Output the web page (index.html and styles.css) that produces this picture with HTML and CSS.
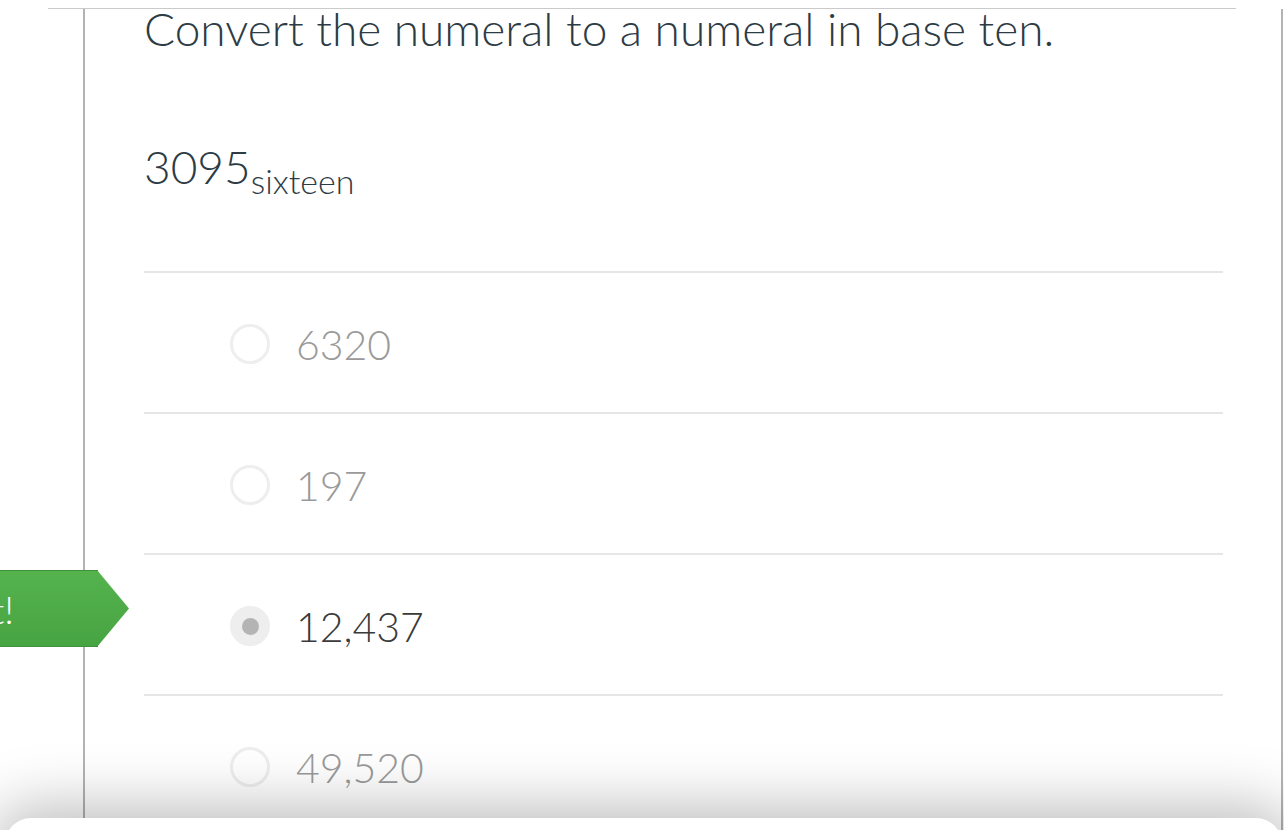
FILE: index.html
```html
<!DOCTYPE html>
<html lang="en">
<head>
  <meta charset="UTF-8" />
  <meta name="viewport" content="width=device-width, initial-scale=1" />
  <title>Quiz Question</title>
  <link rel="stylesheet" href="styles.css">
</head>
<body>

<div class="top-rule"></div>

<div class="question">
  <div class="question-text">Convert the numeral to a numeral in base ten.</div>
  <div class="question-value">3095<sub>sixteen</sub></div>

  <div class="answers">
    <div class="answer">
      <span class="radio"></span>
      <span class="answer-text">6320</span>
    </div>
    <div class="answer">
      <span class="radio"></span>
      <span class="answer-text">197</span>
    </div>
    <div class="answer selected">
      <span class="radio"></span>
      <span class="answer-text">12,437</span>
      <div class="correct-flag">Correct!</div>
    </div>
    <div class="answer">
      <span class="radio"></span>
      <span class="answer-text">49,520</span>
    </div>
  </div>
</div>

<div class="bottom-panel"></div>

</body>
</html>
```

FILE: styles.css
```css
body {
  margin: 0;
  font-family: 'Lato Light', Lato, 'Noto Sans', sans-serif;
  background-color: white;
  color: #2d3b45;
  overflow: hidden;
  height: 830px;
}

.top-rule {
  margin: 8px 0 0 48px;
  width: 1188px;
  height: 1px;
  background-color: #cacaca;
}

.question {
  margin-left: 83px;
  width: 1200px;
  height: 900px;
  border-left: 2px solid #b3b3b3;
  border-right: 2px solid #b3b3b3;
  padding: 1px 58px 0 59px;
  box-sizing: border-box;
}

.question-text {
  font-size: 46px;
  font-weight: 300;
  line-height: 38px;
}

.question-value {
  margin-top: 89px;
  font-size: 46px;
  font-weight: 300;
  line-height: 60px;
}

.question-value sub {
  font-size: 34px;
  vertical-align: -10px;
  line-height: 0;
}

.answers {
  margin-top: 74px;
}

.answer {
  position: relative;
  display: flex;
  align-items: center;
  gap: 26px;
  padding-left: 86px;
  padding-top: 3px;
  height: 136px;
  border-top: 2px solid #e6e6e6;
}

.radio {
  width: 34px;
  height: 34px;
  border: 3px solid #eeeeee;
  border-radius: 50%;
  display: flex;
  align-items: center;
  justify-content: center;
}

.answer-text {
  font-size: 41px;
  font-weight: 300;
  color: #9a9a9a;
}

.selected .radio {
  background-color: #eeeeee;
}

.selected .radio::after {
  content: '';
  width: 17px;
  height: 17px;
  border-radius: 50%;
  background-color: #b4b4b4;
}

.selected .answer-text {
  color: #3a3a3a;
}

.correct-flag {
  position: absolute;
  top: 15px;
  left: -331px;
  width: 200px;
  height: 75px;
  padding-right: 83px;
  text-align: right;
  line-height: 77px;
  font-size: 38px;
  color: white;
  background: linear-gradient(#55b34e, #47a442);
  border: 1px solid #3f913b;
  border-right-color: #3a8a36;
}

.correct-flag::after {
  content: '';
  position: absolute;
  top: -1px;
  left: 100%;
  width: 32px;
  height: 77px;
  background: linear-gradient(#55b34e, #47a442);
  clip-path: polygon(0 0, 100% 50%, 0 100%);
}

.bottom-panel {
  position: fixed;
  left: 5px;
  right: 2px;
  top: 818px;
  height: 60px;
  background-color: white;
  border-radius: 26px 26px 0 0;
  box-shadow: 0 0 60px 12px rgba(0,0,0,0.26);
}
```
